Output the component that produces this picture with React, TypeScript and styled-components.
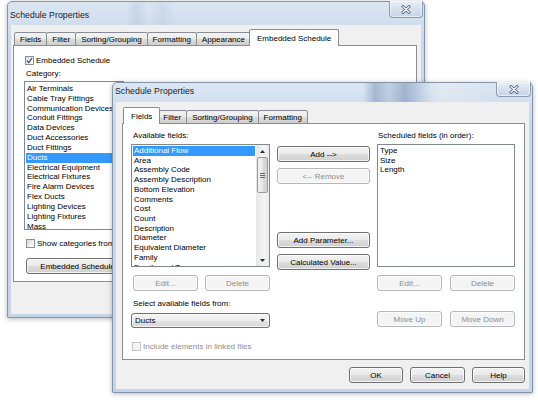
import styled, { createGlobalStyle } from 'styled-components'

const GlobalStyle = createGlobalStyle`
  html, body { margin: 0; padding: 0; background: #fff; }
  body { font-family: "Liberation Sans", Arial, sans-serif; font-size: 8px; color: #000; }
`

const categories = [
  'Air Terminals', 'Cable Tray Fittings', 'Communication Devices', 'Conduit Fittings',
  'Data Devices', 'Duct Accessories', 'Duct Fittings', 'Ducts', 'Electrical Equipment',
  'Electrical Fixtures', 'Fire Alarm Devices', 'Flex Ducts', 'Lighting Devices',
  'Lighting Fixtures', 'Mass',
]

const available = [
  'Additional Flow', 'Area', 'Assembly Code', 'Assembly Description', 'Bottom Elevation',
  'Comments', 'Cost', 'Count', 'Description', 'Diameter', 'Equivalent Diameter', 'Family',
  'Family and Type',
]

const scheduled = ['Type', 'Size', 'Length']

const Desktop = styled.div`
  position: relative;
  width: 538px;
  height: 400px;
  overflow: hidden;
  background: #fff;
`

// windows sit on a free canvas, so they get coordinates
const Frame = styled.div<{ $x: number; $y: number; $w: number; $h: number }>`
  position: absolute;
  left: ${p => p.$x}px;
  top: ${p => p.$y}px;
  width: ${p => p.$w}px;
  height: ${p => p.$h}px;
  box-sizing: border-box;
  border: 1px solid #8494aa;
  border-radius: 5px 5px 1px 1px;
  padding: 0 3px 3px 3px;
  display: flex;
  flex-direction: column;
  background: linear-gradient(180deg, #dbe6f3 0%, #c9d8ea 40px, #c5d4e7 100%);
  box-shadow: 0 1px 5px rgba(0, 0, 0, 0.28);
`

const TitleBar = styled.div<{ $h: number; $streaks: string }>`
  height: ${p => p.$h}px;
  flex: none;
  display: flex;
  align-items: flex-start;
  justify-content: space-between;
  background: ${p => p.$streaks};
  margin: 0 -3px;
  padding: 0 0 0 3px;
`

const Title = styled.div<{ $top: number }>`
  font-size: 8.7px;
  line-height: 11px;
  color: #1a1a1a;
  margin-top: ${p => p.$top}px;
  margin-left: -1px;
  letter-spacing: 0.05px;
`

const CloseBtn = styled.div<{ $w: number; $h: number }>`
  width: ${p => p.$w}px;
  height: ${p => p.$h}px;
  box-sizing: border-box;
  margin-top: -1px;
  margin-right: 1px;
  border: 1px solid #8b9ab0;
  border-top: none;
  border-radius: 0 0 4px 4px;
  background: linear-gradient(180deg, #e9eff7 0%, #d6e1ee 50%, #c6d4e6 100%);
  box-shadow: inset 0 0 0 1px rgba(255, 255, 255, 0.55);
  display: flex;
  align-items: center;
  justify-content: center;
`

const Client = styled.div<{ $pad: string }>`
  flex: 1;
  background: #f0f0f0;
  padding: ${p => p.$pad};
  display: flex;
  flex-direction: column;
`

const TabStrip = styled.div<{ $h: number; $indent: number }>`
  height: ${p => p.$h}px;
  flex: none;
  display: flex;
  align-items: flex-end;
  padding-left: ${p => p.$indent}px;
  position: relative;
  z-index: 1;
  margin-bottom: -1px;
`

const Tab = styled.div<{ $active?: boolean }>`
  box-sizing: border-box;
  height: ${p => (p.$active ? 17 : 14)}px;
  padding: 0 ${p => (p.$active ? 7 : 5)}px;
  margin: 0 ${p => (p.$active ? -2 : 0)}px 0 ${p => (p.$active ? -2 : -1)}px;
  border: 1px solid #898c95;
  border-bottom: ${p => (p.$active ? 'none' : '1px solid #898c95')};
  border-radius: 2px 2px 0 0;
  background: ${p => (p.$active ? '#fff' : 'linear-gradient(180deg, #f3f3f3 0%, #ebebeb 50%, #dddddd 51%, #cfcfcf 100%)')};
  display: flex;
  align-items: center;
  white-space: nowrap;
  position: relative;
  z-index: ${p => (p.$active ? 2 : 0)};
  padding-top: ${p => (p.$active ? 0 : 1)}px;
  &:first-child { margin-left: 0; }
`

const Panel = styled.div<{ $h: number; $pad: string }>`
  height: ${p => p.$h}px;
  flex: none;
  box-sizing: border-box;
  border: 1px solid #898c95;
  background: #fff;
  padding: ${p => p.$pad};
  display: flex;
  overflow: hidden;
`

const Column = styled.div<{ $w: number }>`
  width: ${p => p.$w}px;
  flex: none;
  display: flex;
  flex-direction: column;
  overflow: hidden;
`

const Label = styled.div<{ $top?: number; $left?: number }>`
  line-height: 10px;
  height: 10px;
  white-space: nowrap;
  margin-top: ${p => p.$top ?? 0}px;
  margin-left: ${p => p.$left ?? 0}px;
`

const ListBox = styled.div<{ $w: number; $h: number; $top?: number }>`
  width: ${p => p.$w}px;
  height: ${p => p.$h}px;
  margin-top: ${p => p.$top ?? 0}px;
  flex: none;
  box-sizing: border-box;
  border: 1px solid #828790;
  background: #fff;
  display: flex;
  overflow: hidden;
`

const Items = styled.div<{ $padTop: number }>`
  flex: 1;
  padding: ${p => p.$padTop}px 1px 0 1px;
  overflow: hidden;
`

const Item = styled.div<{ $selected?: boolean; $lh: number }>`
  line-height: ${p => p.$lh}px;
  height: ${p => p.$lh}px;
  padding-left: 1px;
  white-space: nowrap;
  background: ${p => (p.$selected ? '#3399ff' : 'transparent')};
  color: ${p => (p.$selected ? '#fff' : '#000')};
`

const ScrollBar = styled.div`
  width: 13px;
  flex: none;
  background: linear-gradient(90deg, #e6e6e6, #f4f4f4 60%, #ececec);
  display: flex;
  flex-direction: column;
  align-items: center;
`

const ScrollArrow = styled.div`
  width: 13px;
  height: 12px;
  flex: none;
  display: flex;
  align-items: center;
  justify-content: center;
`

const Thumb = styled.div`
  width: 11px;
  height: 36px;
  box-sizing: border-box;
  border: 1px solid #9a9a9a;
  border-radius: 2px;
  background: linear-gradient(90deg, #f2f2f2 0%, #e8e8e8 50%, #d9d9d9 51%, #d0d0d0 100%);
  display: flex;
  align-items: center;
  justify-content: center;
`

const Track = styled.div`
  flex: 1;
`

const Row = styled.div<{ $gap: number; $top?: number; $left?: number; $justify?: string }>`
  display: flex;
  align-items: center;
  gap: ${p => p.$gap}px;
  margin-top: ${p => p.$top ?? 0}px;
  margin-left: ${p => p.$left ?? 0}px;
  justify-content: ${p => p.$justify ?? 'flex-start'};
  flex: none;
`

const Btn = styled.button<{ $w: number; $top?: number }>`
  width: ${p => p.$w}px;
  height: 16px;
  flex: none;
  box-sizing: border-box;
  margin: ${p => p.$top ?? 0}px 0 0 0;
  padding: 0;
  border: 1px solid #707070;
  border-radius: 3px;
  background: linear-gradient(180deg, #f2f2f2 0%, #ebebeb 50%, #dddddd 51%, #cfcfcf 100%);
  box-shadow: inset 0 0 0 1px rgba(255, 255, 255, 0.75);
  font: 8px "Liberation Sans", Arial, sans-serif;
  color: #000;
  white-space: nowrap;
  overflow: hidden;
  &:disabled {
    border-color: #b4b8bb;
    background: #f4f4f4;
    color: #8e8e8e;
    box-shadow: inset 0 0 0 1px #fcfcfc;
  }
`

const Combo = styled.div<{ $w: number; $top: number }>`
  width: ${p => p.$w}px;
  height: 15px;
  margin-top: ${p => p.$top}px;
  box-sizing: border-box;
  border: 1px solid #707070;
  border-radius: 3px;
  background: linear-gradient(180deg, #f5f5f5 0%, #eeeeee 50%, #e2e2e2 51%, #d8d8d8 100%);
  box-shadow: inset 0 0 0 1px rgba(255, 255, 255, 0.7);
  display: flex;
  align-items: center;
  justify-content: space-between;
  padding: 0 4px 0 3px;
`

const CheckRow = styled.div<{ $top: number; $left?: number; $disabled?: boolean }>`
  display: flex;
  align-items: center;
  gap: 2px;
  height: 10px;
  margin-top: ${p => p.$top}px;
  margin-left: ${p => p.$left ?? 0}px;
  color: ${p => (p.$disabled ? '#8e8e8e' : '#000')};
  white-space: nowrap;
`

const Box = styled.span<{ $disabled?: boolean }>`
  width: 9px;
  height: 9px;
  flex: none;
  box-sizing: border-box;
  border: 1px solid ${p => (p.$disabled ? '#c6c6c6' : '#8e8f8f')};
  background: ${p => (p.$disabled ? '#f4f4f4' : 'linear-gradient(135deg, #d6d6d6, #f7f7f7 70%, #ffffff)')};
  display: flex;
  align-items: center;
  justify-content: center;
`

const MiddleCol = styled(Column)`
  padding-top: 15px;
  margin: 0 7px;
`

const CloseGlyph = () => (
  <svg width="10" height="9" viewBox="0 0 10 9">
    <path d="M2 1.5 L8 7.5 M8 1.5 L2 7.5" stroke="#56637a" strokeWidth="3" strokeLinecap="round" />
    <path d="M2 1.5 L8 7.5 M8 1.5 L2 7.5" stroke="#f4f6fa" strokeWidth="1.3" strokeLinecap="round" />
  </svg>
)

const Tick = () => (
  <svg width="7" height="7" viewBox="0 0 7 7">
    <path d="M1 3.6 L2.8 5.6 L6 1" fill="none" stroke="#3b4f86" strokeWidth="1.3" />
  </svg>
)

const Arrow = ({ up }: { up?: boolean }) => (
  <svg width="5" height="3" viewBox="0 0 5 3">
    <path d={up ? 'M0 3 L2.5 0 L5 3 Z' : 'M0 0 L5 0 L2.5 3 Z'} fill="#2a2a2a" />
  </svg>
)

const Grip = () => (
  <svg width="5" height="5" viewBox="0 0 5 5">
    <path d="M0 0.5 H5 M0 2.5 H5 M0 4.5 H5" stroke="#6b6b6b" strokeWidth="1" />
  </svg>
)

const backStreaks =
  'linear-gradient(90deg, transparent 0, transparent 118px, rgba(120,145,180,0.16) 128px, transparent 140px, rgba(120,145,180,0.12) 155px, transparent 168px)'
const frontStreaks =
  'linear-gradient(90deg, transparent 0, transparent 250px, rgba(85,115,160,0.38) 262px, rgba(85,115,160,0.18) 276px, rgba(85,115,160,0.42) 292px, rgba(85,115,160,0.2) 306px, transparent 318px, rgba(235,238,242,0.5) 330px, transparent 380px)'

const BackWindow = () => (
  <Frame $x={7} $y={1} $w={418} $h={317}>
    <TitleBar $h={23} $streaks={backStreaks}>
      <Title $top={8}>Schedule Properties</Title>
      <CloseBtn $w={34} $h={17}><CloseGlyph /></CloseBtn>
    </TitleBar>
    <Client $pad="0 4px 0 2px">
      <TabStrip $h={21} $indent={1}>
        <Tab>Fields</Tab>
        <Tab>Filter</Tab>
        <Tab>Sorting/Grouping</Tab>
        <Tab>Formatting</Tab>
        <Tab>Appearance</Tab>
        <Tab $active>Embedded Schedule</Tab>
      </TabStrip>
      <Panel $h={237} $pad="9px 0 0 10px">
        <Column $w={100}>
          <CheckRow $top={0} $left={1}>
            <Box><Tick /></Box>
            <span>Embedded Schedule</span>
          </CheckRow>
          <Label $top={4} $left={2}>Category:</Label>
          <ListBox $w={110} $h={149} $top={2}>
            <Items $padTop={2}>
              {categories.map(c => (
                <Item key={c} $lh={9.84} $selected={c === 'Ducts'}>{c}</Item>
              ))}
            </Items>
          </ListBox>
          <CheckRow $top={8} $left={2}>
            <Box />
            <span>Show categories from</span>
          </CheckRow>
          <Row $gap={0} $top={10} $left={2}>
            <Btn $w={103}>Embedded Schedule</Btn>
          </Row>
        </Column>
      </Panel>
    </Client>
  </Frame>
)

const FrontWindow = () => (
  <Frame $x={112} $y={82} $w={421} $h={311}>
    <TitleBar $h={19} $streaks={frontStreaks}>
      <Title $top={3}>Schedule Properties</Title>
      <CloseBtn $w={35} $h={15}><CloseGlyph /></CloseBtn>
    </TitleBar>
    <Client $pad="0 4px 0 6px">
      <TabStrip $h={22} $indent={1}>
        <Tab $active>Fields</Tab>
        <Tab>Filter</Tab>
        <Tab>Sorting/Grouping</Tab>
        <Tab>Formatting</Tab>
      </TabStrip>
      <Panel $h={237} $pad="7px 0 0 8px">
        <Column $w={139}>
          <Label $left={2}>Available fields:</Label>
          <ListBox $w={139} $h={123} $top={3}>
            <Items $padTop={1}>
              {available.map(f => (
                <Item key={f} $lh={9.72} $selected={f === 'Additional Flow'}>{f}</Item>
              ))}
            </Items>
            <ScrollBar>
              <ScrollArrow><Arrow up /></ScrollArrow>
              <Thumb><Grip /></Thumb>
              <Track />
              <ScrollArrow><Arrow /></ScrollArrow>
            </ScrollBar>
          </ListBox>
          <Row $gap={7} $top={8} $left={2}>
            <Btn $w={65} disabled>Edit...</Btn>
            <Btn $w={65} disabled>Delete</Btn>
          </Row>
          <Label $top={8} $left={2}>Select available fields from:</Label>
          <Combo $w={139} $top={4}>
            <span>Ducts</span>
            <Arrow />
          </Combo>
          <CheckRow $top={13} $left={1} $disabled>
            <Box $disabled />
            <span>Include elements in linked files</span>
          </CheckRow>
        </Column>
        <MiddleCol $w={93}>
          <Btn $w={93}>Add --&gt;</Btn>
          <Btn $w={93} $top={6} disabled>&lt;-- Remove</Btn>
          <Btn $w={93} $top={48}>Add Parameter...</Btn>
          <Btn $w={93} $top={6}>Calculated Value...</Btn>
        </MiddleCol>
        <Column $w={138}>
          <Label $left={1}>Scheduled fields (in order):</Label>
          <ListBox $w={138} $h={123} $top={3}>
            <Items $padTop={1}>
              {scheduled.map(f => (
                <Item key={f} $lh={9.72}>{f}</Item>
              ))}
            </Items>
          </ListBox>
          <Row $gap={8} $top={8}>
            <Btn $w={65} disabled>Edit...</Btn>
            <Btn $w={65} disabled>Delete</Btn>
          </Row>
          <Row $gap={8} $top={20}>
            <Btn $w={65} disabled>Move Up</Btn>
            <Btn $w={65} disabled>Move Down</Btn>
          </Row>
        </Column>
      </Panel>
      <Row $gap={7} $top={7} $justify="flex-end">
        <Btn $w={54}>OK</Btn>
        <Btn $w={55}>Cancel</Btn>
        <Btn $w={53}>Help</Btn>
      </Row>
    </Client>
  </Frame>
)

export default function App() {
  return (
    <Desktop>
      <GlobalStyle />
      <BackWindow />
      <FrontWindow />
    </Desktop>
  )
}
